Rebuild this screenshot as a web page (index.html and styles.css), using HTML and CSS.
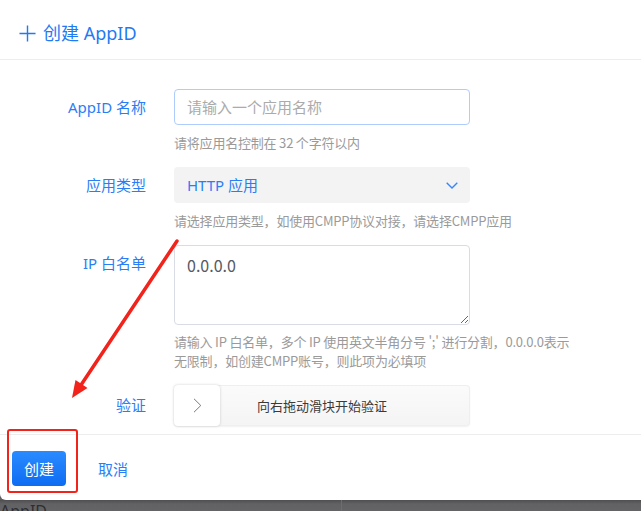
FILE: index.html
```html
<!DOCTYPE html>
<html lang="zh-CN">
<head>
<meta charset="utf-8">
<title>创建 AppID</title>
<link rel="stylesheet" href="styles.css">
</head>
<body>
<div class="page">
  <div class="dialog">
    <header class="dialog-header">
      <svg class="plus-icon" width="18" height="18" viewBox="0 0 18 18" aria-hidden="true"><path d="M9 0.5v17M0.5 9h17" stroke="currentColor" stroke-width="1.5" fill="none"/></svg>
      <h1 class="dialog-title">创建 AppID</h1>
    </header>
    <form class="form">
      <div class="field">
        <label class="field-label">AppID 名称</label>
        <div class="field-control">
          <input class="text-input" type="text" placeholder="请输入一个应用名称">
          <p class="hint">请将应用名控制在 32 个字符以内</p>
        </div>
      </div>
      <div class="field">
        <label class="field-label">应用类型</label>
        <div class="field-control">
          <div class="select">
            <span class="select-value">HTTP 应用</span>
            <svg class="select-arrow" width="12" height="7" viewBox="0 0 12 7" aria-hidden="true"><path d="M0.7 0.7L6 6L11.3 0.7" stroke="currentColor" stroke-width="1.4" fill="none"/></svg>
          </div>
          <p class="hint">请选择应用类型，如使用CMPP协议对接，请选择CMPP应用</p>
        </div>
      </div>
      <div class="field">
        <label class="field-label">IP 白名单</label>
        <div class="field-control">
          <textarea class="textarea">0.0.0.0</textarea>
          <p class="hint hint-multi">请输入 IP 白名单，多个 IP 使用英文半角分号 ';' 进行分割，0.0.0.0表示<br>无限制，如创建CMPP账号，则此项为必填项</p>
        </div>
      </div>
      <div class="field field-slider">
        <label class="field-label">验证</label>
        <div class="field-control">
          <div class="slider">
            <div class="slider-knob">
              <svg width="9" height="15" viewBox="0 0 9 15" aria-hidden="true"><path d="M1 0.8L7.8 7.5L1 14.2" stroke="currentColor" stroke-width="1" fill="none"/></svg>
            </div>
            <span class="slider-text">向右拖动滑块开始验证</span>
          </div>
        </div>
      </div>
    </form>
    <footer class="dialog-footer">
      <button class="btn-primary" type="button">创建</button>
      <button class="btn-link" type="button">取消</button>
    </footer>
  </div>
  <div class="backdrop-strip">
    <span class="behind-text">AppID</span>
    <span class="behind-divider"></span>
  </div>
  <div class="annotation-box"></div>
  <svg class="annotation-arrow" width="641" height="511" viewBox="0 0 641 511" aria-hidden="true">
    <line x1="177" y1="241" x2="81" y2="385" stroke="#f2231b" stroke-width="3.5" stroke-linecap="round"/>
    <polygon points="72,398 87.5,388 75.5,380" fill="#f2231b"/>
  </svg>
</div>
</body>
</html>
```

FILE: styles.css
```css
* {
  box-sizing: border-box;
}

html, body {
  margin: 0;
  padding: 0;
}

body {
  background: #5f5f62;
  font-family: "Noto Sans", "Noto Sans CJK SC", sans-serif;
  overflow: hidden;
}

.page {
  position: relative;
  width: 641px;
  height: 511px;
  overflow: hidden;
}

.dialog {
  background: #ffffff;
  width: 641px;
  height: 500px;
  border-bottom-left-radius: 6px;
  display: flex;
  flex-direction: column;
}

.dialog-header {
  height: 60px;
  border-bottom: 1px solid #ededed;
  display: flex;
  align-items: center;
  padding: 7px 0 0 19px;
  color: #1f7af3;
}

.plus-icon {
  display: block;
  width: 17px;
  height: 17px;
  margin-right: 7px;
}

.dialog-title {
  margin: 0;
  font-size: 18px;
  font-weight: 400;
  line-height: 26px;
  color: #1f7af3;
}

.form {
  padding: 29px 0 8px 0;
  margin: 0;
}

.field {
  display: grid;
  grid-template-columns: 146px 420px;
  column-gap: 28px;
}

.field + .field {
  margin-top: 15px;
}

.field-label {
  text-align: right;
  font-size: 15px;
  line-height: 36px;
  color: #2a7ef5;
}

.field-slider .field-label {
  line-height: 41px;
}

.field-control {
  display: flex;
  flex-direction: column;
  align-items: flex-start;
}

.text-input {
  display: block;
  width: 296px;
  height: 36px;
  border: 1px solid #aecdfd;
  border-radius: 4px;
  padding: 0 12px;
  font-family: inherit;
  font-size: 15px;
  color: #333;
  outline: none;
  background: #fff;
}

.text-input::placeholder {
  color: #ababab;
}

.hint {
  margin: 9px 0 0 0;
  font-family: "Noto Sans CJK SC", sans-serif;
  font-size: 13px;
  line-height: 18px;
  letter-spacing: -0.2px;
  color: #9a9a9a;
  white-space: nowrap;
}

.hint-multi {
  margin-top: 7px;
  line-height: 19px;
}

.select {
  width: 296px;
  height: 36px;
  background: #f3f3f4;
  border-radius: 4px;
  display: flex;
  align-items: center;
  justify-content: space-between;
  padding: 0 12px 0 13px;
  color: #2a7ef5;
}

.select-value {
  font-size: 15px;
  line-height: 20px;
}

.select-arrow {
  display: block;
  color: #3b86f5;
}

.textarea {
  display: block;
  width: 296px;
  height: 80px;
  border: 1px solid #d9dce5;
  border-radius: 4px;
  padding: 8px 12px;
  font-family: "Noto Sans CJK SC", sans-serif;
  font-size: 16px;
  line-height: 22px;
  color: #555a63;
  outline: none;
  resize: both;
  background: #fff;
}

.slider {
  position: relative;
  width: 296px;
  height: 41px;
  border-radius: 4px;
  background: linear-gradient(#fbfbfb, #f4f4f4);
  box-shadow: inset 0 0 0 1px #efefef, 0 1px 2px rgba(0, 0, 0, 0.06);
  display: flex;
  align-items: center;
}

.slider-knob {
  position: relative;
  z-index: 1;
  width: 46px;
  height: 41px;
  border-radius: 4px;
  background: #ffffff;
  box-shadow: 0 0 3px rgba(0, 0, 0, 0.18);
  display: flex;
  align-items: center;
  justify-content: center;
  color: #7a7a7a;
}

.slider-knob svg {
  display: block;
}

.slider-text {
  position: absolute;
  left: 0;
  right: 0;
  text-align: center;
  font-size: 13px;
  line-height: 18px;
  color: #3a3a3a;
}

.dialog-footer {
  border-top: 1px solid #ededed;
  padding: 16px 12px 14px 12px;
  display: flex;
  align-items: center;
}

.btn-primary {
  width: 54px;
  height: 35px;
  border: none;
  border-radius: 4px;
  background: linear-gradient(#2a8bff, #0d6cf2);
  color: #ffffff;
  font-family: inherit;
  font-size: 15px;
  padding: 0;
}

.btn-link {
  margin-left: 32px;
  border: none;
  background: none;
  padding: 0;
  font-family: inherit;
  font-size: 15px;
  color: #2a7ef5;
}

.backdrop-strip {
  position: relative;
  height: 11px;
  background: linear-gradient(#4f4f52, #626265 4px, #646467);
  overflow: hidden;
}

.behind-text {
  display: block;
  font-size: 16px;
  line-height: 16px;
  padding-top: 3px;
  color: #2e2e30;
}

.behind-divider {
  position: absolute;
  left: 341px;
  top: 0;
  bottom: 0;
  width: 1px;
  background: #6d6d70;
}

.annotation-box {
  position: absolute;
  left: 7px;
  top: 429px;
  width: 71px;
  height: 64px;
  border: 2px solid #f2231b;
  border-radius: 3px;
  pointer-events: none;
}

.annotation-arrow {
  position: absolute;
  left: 0;
  top: 0;
  pointer-events: none;
}
```
